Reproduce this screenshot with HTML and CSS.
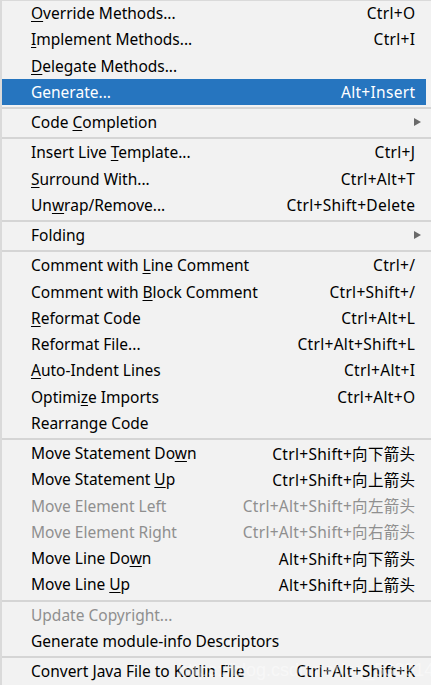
FILE: index.html
```html
<!DOCTYPE html>
<html>
<head>
<meta charset="utf-8">
<link rel="stylesheet" href="styles.css">
</head>
<body>
<div class="menu">
  <div class="item"><span class="label"><u>O</u>verride Methods...</span><span class="key">Ctrl+O</span></div>
  <div class="item"><span class="label"><u>I</u>mplement Methods...</span><span class="key">Ctrl+I</span></div>
  <div class="item"><span class="label"><u>D</u>elegate Methods...</span><span class="key"></span></div>
  <div class="item selected"><span class="label">Generate...</span><span class="key">Alt+Insert</span></div>
  <div class="sep"></div>
  <div class="item"><span class="label">Code <u>C</u>ompletion</span><span class="arrow"></span></div>
  <div class="sep"></div>
  <div class="item"><span class="label">Insert Live <u>T</u>emplate...</span><span class="key">Ctrl+J</span></div>
  <div class="item"><span class="label"><u>S</u>urround With...</span><span class="key">Ctrl+Alt+T</span></div>
  <div class="item"><span class="label">Un<u>w</u>rap/Remove...</span><span class="key">Ctrl+Shift+Delete</span></div>
  <div class="sep"></div>
  <div class="item"><span class="label">Folding</span><span class="arrow"></span></div>
  <div class="sep"></div>
  <div class="item"><span class="label">Comment with <u>L</u>ine Comment</span><span class="key">Ctrl+/</span></div>
  <div class="item"><span class="label">Comment with <u>B</u>lock Comment</span><span class="key">Ctrl+Shift+/</span></div>
  <div class="item"><span class="label"><u>R</u>eformat Code</span><span class="key">Ctrl+Alt+L</span></div>
  <div class="item"><span class="label">Reformat File...</span><span class="key">Ctrl+Alt+Shift+L</span></div>
  <div class="item"><span class="label"><u>A</u>uto-Indent Lines</span><span class="key">Ctrl+Alt+I</span></div>
  <div class="item"><span class="label">Optimi<u>z</u>e Imports</span><span class="key">Ctrl+Alt+O</span></div>
  <div class="item"><span class="label">Rearrange Code</span><span class="key"></span></div>
  <div class="sep"></div>
  <div class="item"><span class="label">Move Statement Do<u>w</u>n</span><span class="key">Ctrl+Shift+向下箭头</span></div>
  <div class="item"><span class="label">Move Statement <u>U</u>p</span><span class="key">Ctrl+Shift+向上箭头</span></div>
  <div class="item disabled"><span class="label">Move Element Left</span><span class="key">Ctrl+Alt+Shift+向左箭头</span></div>
  <div class="item disabled"><span class="label">Move Element Right</span><span class="key">Ctrl+Alt+Shift+向右箭头</span></div>
  <div class="item"><span class="label">Move Line Do<u>w</u>n</span><span class="key">Alt+Shift+向下箭头</span></div>
  <div class="item"><span class="label">Move Line <u>U</u>p</span><span class="key">Alt+Shift+向上箭头</span></div>
  <div class="sep"></div>
  <div class="item disabled"><span class="label">Update Copyright...</span><span class="key"></span></div>
  <div class="item"><span class="label">Generate module-info Descriptors</span><span class="key"></span></div>
  <div class="sep"></div>
  <div class="item"><span class="label">Convert Java File to Kotlin File</span><span class="key">Ctrl+Alt+Shift+K</span></div>
  <div class="watermark" aria-hidden="true">https://blog.csdn.net/qq_53391408</div>
</div>
</body>
</html>
```
FILE: styles.css
```css
html, body {
  margin: 0;
  padding: 0;
  background: #f2f2f2;
}
.menu {
  position: relative;
  width: 431px;
  height: 685px;
  box-sizing: border-box;
  border-left: 2px solid #dadada;
  padding-right: 5px;
  background: #f2f2f2;
  box-shadow: inset 0 1px 0 #dadada;
  font-family: "Noto Sans", "Noto Sans CJK SC", sans-serif;
  font-size: 15.5px;
  color: #000;
  overflow: hidden;
}
.item {
  height: 26.25px;
  display: flex;
  align-items: center;
  justify-content: space-between;
  padding-left: 29px;
  padding-right: 11px;
  white-space: nowrap;
}
.key {
  letter-spacing: 0.3px;
  margin-right: -0.3px;
}
.item u {
  text-underline-offset: 2px;
  text-decoration-thickness: 1px;
}
.selected {
  background: #2675bf;
  color: #fff;
}
.disabled {
  color: #8f8f8f;
}
.sep {
  height: 4px;
  box-sizing: border-box;
  border-bottom: 2px solid #d5d5d5;
  margin-right: -5px;
  margin-left: -2px;
}
.arrow {
  width: 0;
  height: 0;
  border-top: 4.5px solid transparent;
  border-bottom: 4.5px solid transparent;
  border-left: 7px solid #6a6a6a;
  margin-right: -6px;
}
.watermark {
  position: absolute;
  left: 176px;
  top: 660px;
  font-family: "Liberation Sans", sans-serif;
  font-size: 18px;
  color: rgba(255, 255, 255, 0.45);
  pointer-events: none;
}
```
